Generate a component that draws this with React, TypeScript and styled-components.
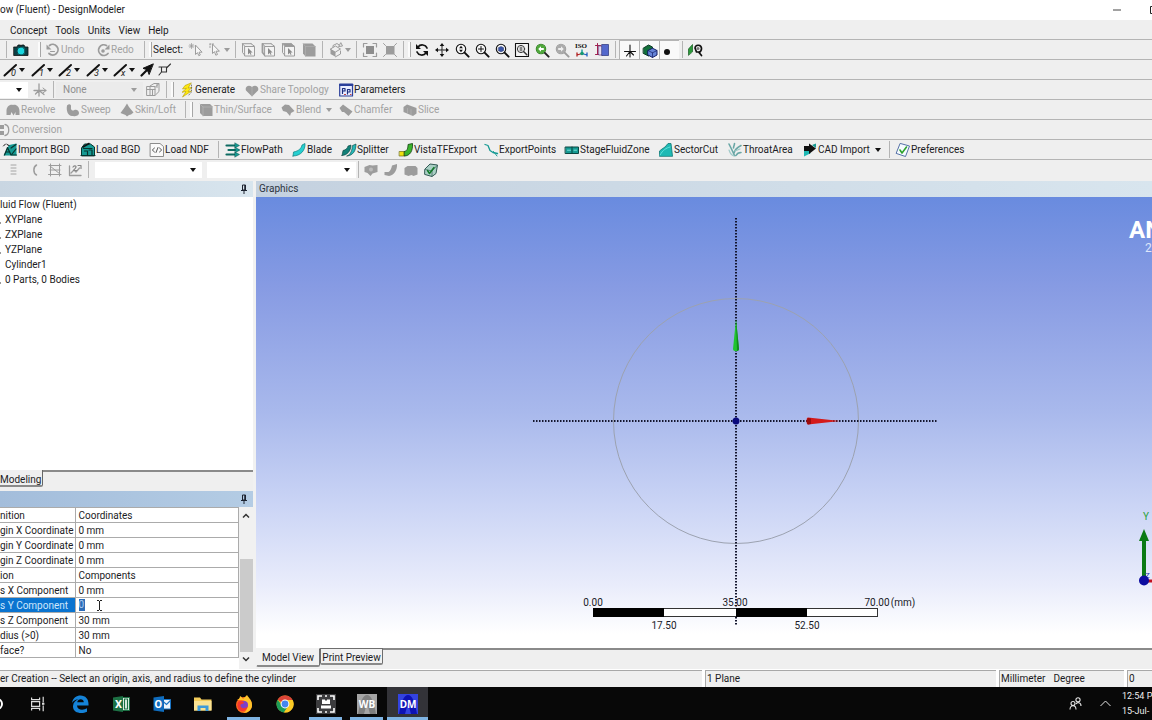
import React from 'react';
import styled, { createGlobalStyle, css } from 'styled-components';

const GlobalStyle = createGlobalStyle`
  * { box-sizing: border-box; }
  html, body, #root { height: 100%; margin: 0; }
  body { overflow: hidden; font: 10px/14px Roboto, "Noto Sans", sans-serif; font-variant-ligatures: none; color: #1c1c24; background: #efefef; }
  button, select, input { font: inherit; color: inherit; }
  svg { display: block; flex: none; }
`;

/* ---------- layout ---------- */
const Shell = styled.div`
  display: flex; flex-direction: column; height: 100vh; min-height: 480px; overflow: hidden;
`;
const TitleBar = styled.header`
  display: flex; align-items: center; height: 20px; flex: none; background: #fff; overflow: hidden; white-space: nowrap;
`;
const TitleText = styled.h1`margin: 0; font: inherit; flex: 1;`;
const WindowButton = styled.button<{ $w: number }>`
  width: ${p => p.$w}px; height: 20px; padding: 0; border: 0; background: none; overflow: hidden;
  display: flex; align-items: center; justify-content: flex-start; flex: none;
`;
const MenuBar = styled.nav`
  display: flex; align-items: center; height: 19px; flex: none; padding-left: 6px;
`;
const MenuButton = styled.button`
  padding: 2px 4px 0; border: 0; background: none; height: 19px;
`;
const Bar = styled.div<{ $pad?: number }>`
  display: flex; align-items: center; height: 20px; flex: none; padding-left: ${p => p.$pad ?? 0}px;
  border-top: 1px solid #b4b4b4; white-space: nowrap; overflow: hidden;
`;
const LastBar = styled(Bar)`height: 22px; padding-bottom: 2px;`;
const Space = styled.span<{ $w: number }>`width: ${p => p.$w}px; flex: none;`;
const Sep = styled.span<{ $w: number }>`
  width: ${p => p.$w}px; height: 17px; flex: none; display: flex; justify-content: center;
  &::before { content: ''; width: 1px; background: #b4b4b4; }
`;
const Grip = styled(Sep)`
  height: 15px;
  &::before { width: 2px; background: #fbfbfb; border-right: 1px solid #a6a6a6; }
`;
const Label = styled.span<{ $w: number }>`width: ${p => p.$w}px; flex: none; padding-top: 1px;`;
const ToolButton = styled.button<{ $w: number; $on?: boolean; $center?: boolean }>`
  width: ${p => p.$w}px; height: 19px; padding: 1px 0 0; flex: none; border: 0; background: none;
  display: flex; align-items: center; justify-content: ${p => (p.$center ? 'center' : 'flex-start')};
  white-space: nowrap;
  &:disabled { color: #a2a2a2; }
  ${p => p.$on && css`background: #f9f9f9; border-left: 1px solid #b4b4b4; border-top: 1px solid #b4b4b4;`}
`;
const Combo = styled.span<{ $w: number; $off?: boolean }>`
  display: grid; grid-template-columns: 1fr 18px; align-items: center; justify-items: center;
  width: ${p => p.$w}px; height: 16px; flex: none; background: ${p => (p.$off ? '#ebebeb' : '#fff')};
  color: ${p => (p.$off ? '#8f8f8f' : '#111')};
  select { grid-area: 1 / 1 / 2 / 3; width: 100%; height: 16px; appearance: none; border: 0; background: none; padding: 0 7px; opacity: 1; }
  svg { grid-area: 1 / 2; pointer-events: none; }
`;
const Workspace = styled.main`
  flex: 1; min-height: 0; display: grid; grid-template-columns: 253px minmax(0, 1fr); column-gap: 3px; background: #f1f1f1;
`;
const LeftColumn = styled.aside`display: flex; flex-direction: column; min-height: 0; min-width: 0;`;
const PaneHead = styled.div<{ $active?: boolean }>`
  height: 16px; flex: none; display: flex; align-items: center; justify-content: flex-end; padding-right: 5px;
  background: ${p => (p.$active ? 'linear-gradient(90deg,#a3bddb,#b4cce4)' : 'linear-gradient(90deg,#c9d6e2,#d8e5ee)')};
`;
const GraphicsHead = styled(PaneHead)`
  justify-content: flex-start; padding-left: 3px; color: #2c3440;
  background: linear-gradient(90deg,#c4d1df,#d8e5ee);
`;
const HeadTitle = styled.h2`margin: 0; font: inherit;`;
const PinButton = styled.button`padding: 0; border: 0; background: none; height: 14px; display: flex; align-items: center;`;
const Tree = styled.ul`
  flex: 1; min-height: 0; margin: 0; padding: 0; list-style: none; background: #fff; overflow: hidden;
`;
const TreeItem = styled.li<{ $indent?: number }>`
  height: 15px; line-height: 15px; display: flex; padding-left: ${p => p.$indent ?? 0}px; white-space: nowrap;
`;
const TreeMark = styled.span`
  width: 5px; flex: none; display: flex; align-items: flex-end; padding-bottom: 3px; color: #777;
  &::before { content: ''; width: 1px; height: 2px; background: #999; }
`;
const TabStrip = styled.div`display: flex; height: 21px; flex: none; align-items: flex-start; background: #efefef;`;
const LeftTab = styled.button`
  width: 43px; height: 17px; padding: 3px 0 0; border: 0; text-align: left; background: #efefef;
  border-right: 1px solid #666; border-bottom: 2px solid #8a8a8a; border-radius: 0 0 2px 0;
`;
const StripRule = styled.span`flex: 1; height: 2px; background: #8a8a8a;`;
const Details = styled.div`flex: none; height: 162px; display: flex; background: #fff;`;
const PropTable = styled.table`
  border-collapse: collapse; table-layout: fixed; width: 239px; height: 151px; flex: none;
  tr { height: 15px; }
  th, td { height: 15px; padding: 0; border: 1px solid #ababab; font-weight: 400; text-align: left; line-height: 13px; white-space: nowrap; overflow: hidden; }
  th { border-left: 0; width: 75px; }
  td { padding-left: 3px; }
`;
const PropRow = styled.tr<{ $selected?: boolean }>`
  ${p => p.$selected && css`th { background: #0a74d0; color: #cfe6fb; }`}
`;
const ValueCell = styled.span`display: flex; align-items: center; gap: 12px;`;
const ValueInput = styled.input`
  width: 6px; height: 12px; padding: 0; border: 0; outline: 0; background: #2b6cb8; color: #a9cdf2; line-height: 12px;
`;
const Scroll = styled.div`
  flex: 1; display: flex; flex-direction: column; align-items: center; justify-content: space-between; padding: 4px 0 6px; background: #f1f1f1;
`;
const Thumb = styled.span`width: 13px; height: 93px; background: #cbcbcb; margin-top: 36px;`;
const ScrollButton = styled.button`padding: 0; border: 0; background: none; height: 8px; display: flex; align-items: center;`;
const RightColumn = styled.section`display: flex; flex-direction: column; min-width: 0; min-height: 0;`;
const Viewport = styled.div`
  flex: 1; min-height: 0; overflow: hidden;
  background: linear-gradient(180deg,#698bdf 0%,#879be3 20%,#a9b9ec 48%,#cad4f5 68%,#e9ecfb 86%,#ffffff 97%);
  svg { width: 100%; height: 100%; }
`;
const ViewTabs = styled.div`
  display: flex; align-items: flex-start; height: 21px; flex: none; background: #efefef;
`;
const ViewTab = styled.button<{ $active?: boolean; $w: number }>`
  width: ${p => p.$w}px; flex: none; height: ${p => (p.$active ? 19 : 17)}px; padding: 2px 0 0; background: #f1f1f1;
  border: 1px solid #6e6e6e; border-bottom-width: 2px; border-bottom-color: #8a8a8a;
  border-radius: 0 0 2px 2px;
  ${p => p.$active && css`border-top-color: #f1f1f1; border-left-color: #f1f1f1;`}
`;
const StatusBar = styled.footer`
  display: flex; height: 18px; flex: none; background: #fff; column-gap: 3px; border-top: 1px solid #fff; white-space: nowrap;
`;
const StatusCell = styled.span<{ $w?: number }>`
  ${p => (p.$w ? css`width: ${p.$w}px; flex: none;` : css`flex: 1;`)}
  background: #efefef; border-top: 1px solid #a8a8a8; border-left: 1px solid #a8a8a8; padding-left: 1px; line-height: 15px; overflow: hidden;
`;
const StatusMessage = styled(StatusCell)`border-left: 0; padding-left: 0;`;
const Unit = styled.span`margin-right: 8px;`;
const TaskBar = styled.footer`display: flex; height: 33px; flex: none; background: #080808; color: #eee; overflow: hidden;`;
const TaskButton = styled.button<{ $w?: number; $open?: boolean; $active?: boolean }>`
  width: ${p => p.$w ?? 41}px; height: 33px; flex: none; padding: 0; border: 0; display: flex; justify-content: center; align-items: center;
  background: ${p => (p.$active ? '#333338' : 'none')};
  position: relative;
  &::after { content: ''; display: ${p => (p.$open ? 'block' : 'none')}; position: absolute; bottom: 0;
    left: ${p => (p.$active ? 0 : 4)}px; right: ${p => (p.$active ? 0 : 4)}px; height: 3px; background: #7fb4e3; }
`;
const Tray = styled.div`margin-left: auto; display: flex; align-items: center;`;
const Clock = styled.time`width: 32px; padding-left: 2px; font-size: 9px; line-height: 15px; padding-top: 1px; white-space: pre;`;

/* ---------- icons ---------- */
const G = '#9c9c9c';
const K = '#111';
const T = '#159a93';

const Svg = ({ children, w = 16 }: { children: React.ReactNode; w?: number }) => (
  <svg width={w} height={16} viewBox={`0 0 ${w} 16`} fill="none" strokeLinecap="round" strokeLinejoin="round" aria-hidden>{children}</svg>
);
const Caret = ({ c = K }: { c?: string }) => (
  <svg width={6} height={4} viewBox="0 0 6 4" aria-hidden><path d="M0 0h6L3 4z" fill={c} /></svg>
);
const Lens = ({ c, inner, handle = c }: { c: string; inner: React.ReactNode; handle?: string }) => (
  <Svg>
    <circle cx="7" cy="7" r="4.7" stroke={c} strokeWidth="1.1" fill="#f4f4f4" />
    <path d="M10.6 10.6l4 4" stroke={handle} strokeWidth="2" />{inner}
  </Svg>
);
const Pencil = ({ ch }: { ch: string }) => (
  <Svg>
    <path d="M1.500 13.500L13 3" stroke={K} strokeWidth="2" />
    <text x="8" y="14" fontSize="9" fontStyle="italic" fill="#222" fontFamily="Roboto, sans-serif">{ch}</text>
  </Svg>
);
const Pick = ({ top, side }: { top?: boolean; side?: boolean }) => (
  <Svg>
    <path d="M1.500 5V1.700h8.700M1.500 1.700L4 4.500M10 1.700l3.500 2.500" stroke={G} />
    <path d="M1.500 2v8.500L4 13.500" stroke={G} strokeWidth={side ? 1.8 : 1} />
    <rect x="4" y="4.500" width="9.500" height="9.500" stroke={G} fill="#f3f3f3" />
    {top && <path d="M2 1.500h8.500l3 3H4z" fill={G} />}
    <path d="M7 6v6.500l1.700-1.500 1 2 .8-.4-.9-2h2z" fill="#8a8a8a" />
  </Svg>
);

const icons: Record<string, React.ReactNode> = {
  camera: <Svg><path d="M1 5h3l1-2h2.500v2h1V3H11l1 2h3v8.500H1z" fill="#0c3f45" stroke={K} strokeWidth=".8" /><circle cx="8" cy="9" r="4" fill="#19d6de" stroke="#0d4a50" /></Svg>,
  undo: <Svg><path d="M4.500 3.500A5.300 5.300 0 1 1 4 11.500" stroke={G} strokeWidth="1.800" /><path d="M1.500 2.500v5h5z" fill={G} /><path d="M5.500 9.500h4" stroke={G} /></Svg>,
  redo: <Svg><path d="M11.500 3.500A5.300 5.300 0 1 0 13 11.500" stroke={G} strokeWidth="1.800" /><path d="M14.500 2.500v5h-5z" fill={G} /><circle cx="8" cy="9" r="1.800" fill={G} /></Svg>,
  newSel: <Svg><path d="M1 4h5M3.500 1.500v5M1.700 2.200l3.600 3.600M5.300 2.200L1.700 5.800" stroke={G} strokeWidth=".8" /><path d="M7.500 3.500v9l2-1.800 1.300 3 1.500-.700-1.300-2.800h2.700z" stroke={G} fill="#f6f6f6" /></Svg>,
  selMode: <Svg><path d="M2 2h5M2 2v4" stroke={G} strokeDasharray="1 1.500" /><path d="M4.500 2.500v9l2-1.800 1.300 3.500 1.700-.700-1.500-3.300h3z" stroke={G} fill="#f6f6f6" /></Svg>,
  pickPt: <Pick />, pickEdge: <Pick side />, pickFace: <Pick top />,
  body: <Svg><path d="M2 1.500h9.500l3 3v10H4.500l-2.500-3z" fill={G} /><path d="M2 1.500l2.500 3h10M4.500 4.500v10" stroke="#b4b4b4" strokeWidth=".6" /></Svg>,
  extend: <Svg><path d="M1.500 7l5-3 5 3-5 3z" stroke={G} /><path d="M1.500 7v5l5 2.800V10z" fill={G} /><path d="M6.500 14.800l5-2.800V9M4 5V3.500l4-2 2 1.500M12 1l1.500 3-3.500.5z" stroke={G} /></Svg>,
  expand: <Svg><rect x="4" y="4" width="8" height="8" fill="#8d8d8d" /><path d="M1.500 5V1.500H5M11 1.500h3.500V5M14.500 11v3.500H11M5 14.500H1.500V11" stroke={G} strokeWidth="1.200" /></Svg>,
  shrink: <Svg><rect x="4" y="4" width="8.500" height="8.500" fill={G} /><path d="M1.500 1.500l2 2M14.500 1.500l-2 2M14.500 14.500l-2-2M1.500 14.500l2-2" stroke={G} /></Svg>,
  rotate: <Svg><path d="M13 6C11.500 2.500 6.500 1.800 4 5M3 10c1.500 3.500 6.500 4.200 9 1" stroke={K} strokeWidth="1.700" /><path d="M2 2v5h5zM14 14V9H9z" fill={K} /></Svg>,
  pan: <Svg><path d="M8 4v8M4 8h8" stroke={K} strokeDasharray="1.500 1" /><path d="M8 1l2.300 3H5.700zM8 15l2.300-3H5.700zM1 8l3-2.300v4.600zM15 8l-3-2.300v4.600z" fill={K} /></Svg>,
  zoom: <Lens c={K} inner={<path d="M7 3.700l1.900 2.600H5.100zM7 10.300l1.900-2.600H5.100z" fill={K} />} />,
  zoomIn: <Lens c={K} inner={<path d="M4.500 7h5M7 4.500v5" stroke={K} />} />,
  zoomBox: <Lens c={K} inner={<path d="M4.500 5.700L7 4.500l2.500 1.200v3L7 9.800 4.500 8.700z" fill="#3a55a8" stroke="#1b2a66" strokeWidth=".5" />} />,
  zoomFit: <Svg><rect x="1.500" y="1.500" width="13" height="13" stroke={K} strokeWidth="1.100" fill="#f4f4f4" /><circle cx="7" cy="7" r="3.600" stroke="#333" /><path d="M9.800 9.800l3 3" stroke="#333" strokeWidth="1.500" /><path d="M7 5v4M5.800 6h2.400M5.800 8h2.400" stroke="#333" strokeWidth=".7" /></Svg>,
  magOn: <Lens c="#2f7a22" handle="#222" inner={<><circle cx="7" cy="7" r="4.600" fill="#4fa83b" /><path d="M4.200 7l2.800-2.800V6h2.800v2H7v1.800z" fill="#fff" /></>} />,
  magOff: <Lens c={G} inner={<><circle cx="7" cy="7" r="4.500" fill="#ababab" /><path d="M9.800 7L7 4.200V6H4.200v2H7v1.800z" fill="#eee" /></>} />,
  iso: <Svg><text x="1" y="6" fontSize="7" fontWeight="700" fontFamily="Liberation Serif, serif" fill={K}>ISO</text><path d="M8 11V8" stroke="#1fa0a0" strokeWidth="1.500" /><path d="M8 11.500l-5 1.500M3 11v3" stroke="#b02020" strokeWidth="1.300" /><path d="M8 11.500l5 1.500M13 11v3" stroke="#2060c0" strokeWidth="1.300" /><circle cx="8" cy="11.500" r="1.800" fill="#159a70" /></Svg>,
  lookAt: <Svg><path d="M1.500 3.500h5M3.500 1.500v11M1.500 12.500h3" stroke="#a02050" /><path d="M5 4h4v9H5z" fill="#e4dcf4" stroke="#704080" strokeWidth=".7" /><rect x="8" y="2.500" width="6.500" height="11" fill="#5468cc" stroke="#28327a" strokeWidth=".7" /></Svg>,
  axis: <Svg><path d="M8 2v12M2.500 8.500h11M8 8.500L4.500 13M8 8.500l3.500 3.500" stroke={K} strokeWidth="1.100" /></Svg>,
  model: <Svg><path d="M1.500 5l5-3 4 2v6l-4 3-5-2.500z" fill="#12703a" stroke="#0b3a24" /><path d="M6 7.500l4.500-2.300 4.500 2.300v4.500L10.500 14.500 6 12z" fill="#6684d8" stroke="#151f66" /><path d="M6 7.500l4.500 2.300L15 7.500M10.500 9.800v4.700" stroke="#151f66" strokeWidth=".7" /></Svg>,
  dot: <Svg><circle cx="5" cy="9" r="3" fill={K} /></Svg>,
  leaf: <Svg><path d="M1.500 13V7l4-4.500v7z" fill="#2c9a3a" stroke="#145a20" strokeWidth=".7" /><path d="M8 6c.5-4 6.500-3.500 6.500.5 0 2.500-1.500 3.500-2.500 4l2.500 3M8 6l1.500 4h2.500" stroke={K} strokeWidth="1.700" /><circle cx="11" cy="6.500" r="1.500" fill="#777" /></Svg>,
  arrowBlack: <Svg><path d="M2.500 13.500L9 7" stroke={K} strokeWidth="2.200" /><path d="M14 2L4 6.300l2.700 1L9 9.500l1 2.700z" fill={K} stroke={K} /></Svg>,
  tag: <Svg><path d="M3 5h6.500v5H4.500V5M2 5h8M9.500 6l4-4M2 13l2.500-3" stroke="#333" strokeWidth="1.100" /></Svg>,
  axisOff: <Svg><path d="M7 2v12M2 8.500h12M7 8.500L3.500 12M7 8.500l5 4" stroke={G} strokeWidth="1.300" /><path d="M11 6l3 2.500-3 2.500" stroke={G} /></Svg>,
  sketchNew: <Svg><path d="M2 4.500h8v9H2zM2 7.500h8M5 4.500v9M7.500 7.500v6M5 4l4-2.500h5v8L10.500 13" stroke={G} /><path d="M10.500 5l3-3M12 2v3.500" stroke={G} /></Svg>,
  bolt: <Svg><path d="M12 1L6 3.500 3.500 7l4-.7-4.500 4 4-.8-3.500 5.500 9-6-3.500.5 4-4.300-3.600.8z" fill="#ffea12" stroke="#b59a00" strokeWidth=".6" /><path d="M12.500 3v7L9 14" stroke="#555" strokeWidth=".7" strokeDasharray="1 1.500" /></Svg>,
  topo: <Svg><path d="M8 14.500L2 8.500c-1.500-3.500 2.500-6.500 6-3.500 3.500-3 7.500 0 6 3.500z" fill={G} /><path d="M8 5v9" stroke="#bbb" strokeWidth=".6" /></Svg>,
  params: <Svg><rect x="1.700" y="2" width="12.800" height="12" fill="#e9edff" stroke="#2a3f9a" strokeWidth="1.200" /><path d="M2 3h12.500" stroke="#2a3f9a" strokeWidth="2" /><path d="M4.500 11.500V6.500H7v2.500H4.500M9.500 12V7.500H12V10H9.500" stroke="#1d2f80" strokeWidth="1.200" /><path d="M6.500 12.500h1M12.500 12.500h.5" stroke="#c03030" /></Svg>,
  revolve: <Svg><path d="M1.500 13V8C2 3.500 6 2 8 3c3-1 6.500 1.500 6.500 6v4h-4v-3l-2 3.500-2-3.500-1 3z" fill={G} /></Svg>,
  sweep: <Svg><path d="M2 3.500c2-2 4.500-1.500 4 1.500-.5 3 1 4 3 3.200 2.500-1.200 5 .3 5 2.800 0 3-4 3.500-7 3-4-.5-6-5-5-10.500z" fill={G} /></Svg>,
  skin: <Svg><path d="M8 1.500l2 3.500 4.500 5.500-2.500 2-2 .5-2 1.500-1.500-1.500-5-2L5.500 5.500z" fill={G} /></Svg>,
  solid: <Svg><path d="M2 2h10l2.500 2.500V14H5l-3-3z" fill={G} /><path d="M2 2l3 3h9.500M5 5v9" stroke="#b8b8b8" strokeWidth=".7" /></Svg>,
  blend: <Svg><path d="M1.500 5.500L5 2.500l4 .5 5.500 6-3.500 2-1 3-3.500-4-3.500-1z" fill={G} /></Svg>,
  chamfer: <Svg><path d="M1.500 6L5 2.500l9.500 7L10.500 14 6 10H4z" fill={G} /></Svg>,
  slice: <Svg><path d="M1.500 5L5 2.500 14.500 6v5.500L11 14 1.500 10z" fill={G} /><path d="M5.500 6.500v5M9 7.500V13" stroke="#b8b8b8" strokeWidth=".6" /></Svg>,
  conversion: <Svg w={12}><path d="M0 3h4v4H0zM0 9h4v4H0z" fill={G} /><path d="M5 2.500c5 1 5 10 0 11" stroke={G} strokeWidth="1.300" /></Svg>,
  importBgd: <Svg><path d="M1.500 13.500L7 3l7.500-1.500v12z" fill={T} /><path d="M2.500 13l3-7.500L9 13M4 10h4M9 6l5-3.500M10 12l4-5M9 13h5.500" stroke="#06352f" strokeWidth="1.200" /><path d="M1.500 4l2-2M5 2.500l2 1" stroke={K} /></Svg>,
  loadBgd: <Svg><path d="M1.500 13.500V6l3-4h6l4 3v8.500z" fill={T} stroke="#06352f" /><path d="M3.500 6.500H12M4.500 9h3v4M9 8h3v5M1 13.500h14" stroke="#06352f" strokeWidth="1.200" /><path d="M3 5l6-3.500" stroke={K} strokeWidth="1.500" /></Svg>,
  loadNdf: <Svg><path d="M1.500 1.500h9.500l3.500 3v10h-13z" stroke="#8c8c8c" fill="#fafafa" /><path d="M5.500 6L3.300 8l2.200 2M10.500 6l2.200 2-2.200 2M9 5.500L7 10.500" stroke="#444" strokeWidth=".9" /></Svg>,
  flow: <Svg><path d="M1.500 3.500H11M3.500 8H13M1.500 12.500H11" stroke="#0d6b62" strokeWidth="2.200" /><path d="M10 1l4.500 2.500L10 6zM10.500 5.500L15 8l-4.500 2.500zM10 10l4.500 2.500L10 15z" fill={T} stroke="#0d5650" strokeWidth=".5" /></Svg>,
  blade: <Svg><path d="M2 14l.5-4C8 9 10.500 6 11 3l3-1.500C14.500 8 10 14 2 14z" fill="#26cfd0" stroke="#0f7f80" strokeWidth=".7" /></Svg>,
  splitter: <Svg><path d="M1 13.500l1-5C5 8 6.500 6 7 4l3-1C10 9 6 13.500 1 13.500z" fill="#118078" stroke="#073f3b" strokeWidth=".6" /><path d="M6 14c4-1.500 5-6 5.500-10.500L15 2c0 7-3 11.500-9 12z" fill="#25b8b8" stroke="#073f3b" strokeWidth=".6" /></Svg>,
  vista: <Svg><path d="M1.500 9.500h5v4.500h-5z" fill="#f0e010" stroke="#5a5a00" strokeWidth=".6" /><path d="M6.500 9.500C9.500 9 10 6 10 2.500l4.500-1C15 9 12 14 6.500 14z" fill="#3bb52e" stroke="#123f10" strokeWidth=".8" /></Svg>,
  points: <Svg><path d="M2 2.500l3 1 2 5 3 2 4.500 1" stroke={T} strokeWidth="1.300" /><path d="M10.500 9.500L14 14" stroke={T} /></Svg>,
  stage: <Svg><rect x="1.500" y="5" width="13" height="6.500" fill={T} stroke="#0a4742" /><path d="M8 5v6.500" stroke="#0a4742" /><path d="M3.500 8.200h3M10 8.200h2.500" stroke="#7ce0d8" /></Svg>,
  sector: <Svg><path d="M1.500 14V9L4 7l3-2 3-3.500h3l1.500 12.500z" fill="#1fb9b4" stroke="#0e7773" strokeWidth=".8" /><path d="M2 13c3-5 6-7 10-8" stroke="#62e3dd" /></Svg>,
  throat: <Svg><path d="M2 2l2.500 5 3 6.500M6.500 6c0-2 1-3 1-4.500M7 11c1-4 3-5.500 7-7.500M9 13.500c1-2 2.500-3 5-3" stroke="#6aa7a6" strokeWidth="1.600" /><path d="M2 8c1 3 2 5 5 6M8 9l5-2" stroke="#9fc9c8" strokeWidth="1.200" /></Svg>,
  cad: <Svg><path d="M2 14.500V6h5v5h2z" fill="#1fb9b4" /><path d="M2 4h5V1.500L14 6.500 7 12V9H2z" fill={K} /><path d="M10 3l4-1.500V6" fill={T} /></Svg>,
  prefs: <Svg><path d="M5.500 1.500l9 2.500-4 10.500-9-3z" fill="#f6fbff" stroke="#5572a8" /><path d="M5 8l2 3 4.500-6" stroke="#2da32d" strokeWidth="1.600" /></Svg>,
  list: <Svg><path d="M6 3h5M6 6h5M6 9h5M6 12h5" stroke={G} strokeWidth=".9" /></Svg>,
  arc: <Svg><path d="M9.500 3c-3.500 2-3.500 8 0 10" stroke={G} strokeWidth="1.500" /></Svg>,
  grid: <Svg><path d="M2 3.500h12M3 8h10M1.500 12.500H14M3.500 2v12M12.500 2v12M3 4l10 8" stroke={G} /></Svg>,
  chart: <Svg><path d="M2.500 4v9.500H14M4 11l3-3 2 2 3.500-4" stroke={G} strokeWidth="1.300" /><path d="M6 5c2-2.500 4-.5 2.500 1L6.500 8.500H10M11 3.500h3v3" stroke="#888" strokeWidth="1.200" /></Svg>,
  blob1: <Svg><path d="M1.500 5l5-2 3 .5 5-.5v7l-5 1.500-2 2.500-3-3-3-1z" fill={G} /><circle cx="8" cy="7.500" r="2" fill="#bbb" /></Svg>,
  blob2: <Svg><path d="M1.500 10h4c2-1 3-4 3.500-6.500L14 2c.5 6-3 11.500-8 12l-4.500-1z" fill={G} /></Svg>,
  blob3: <Svg><path d="M1.500 6l3-2h8l2 2v6.500l-4 1.500-2-1-3 1-4-1.500z" fill={G} /></Svg>,
  check: <Svg><path d="M2 7l5-5 7.500 1-1.500 8.500-4 3-7-2z" fill="#a9cfc4" stroke="#335a55" /><path d="M2.500 7.500l6.500 1.500 5-5.500M9 9v5" stroke="#335a55" strokeWidth=".7" /><path d="M4.500 8.500l2 3 4.500-6" stroke="#137a2a" strokeWidth="1.500" /></Svg>,
};

type ToolProps = { icon: string; w: number; text?: string; off?: boolean; on?: boolean; caret?: boolean };
const Tool = ({ icon, w, text, off, on, caret }: ToolProps) => (
  <ToolButton $w={w} $on={on} $center={!text} disabled={off} aria-label={text ?? icon}>
    {icons[icon]}{text}{caret && text && <Space $w={5} />}{caret && <Caret c={off ? G : K} />}
  </ToolButton>
);
const Tools = ({ names, off, on }: { names: string[]; off?: boolean; on?: boolean }) => (
  <>{names.map(n => <Tool key={n} icon={n} w={20} off={off} on={on} />)}</>
);
const Pin = () => (
  <PinButton aria-label="Auto hide">
    <svg width="8" height="10" viewBox="0 0 8 10" fill="none" stroke="#1c2330"><path d="M2.500 1h3v5h-3zM1 6.500h6M4 6.500V10" /><path d="M5 1v5" strokeWidth="1.500" /></svg>
  </PinButton>
);

/* ---------- data ---------- */
const turbo: ToolProps[] = [
  { icon: 'flow', text: 'FlowPath', w: 66 }, { icon: 'blade', text: 'Blade', w: 50 },
  { icon: 'splitter', text: 'Splitter', w: 57 }, { icon: 'vista', text: 'VistaTFExport', w: 85 },
  { icon: 'points', text: 'ExportPoints', w: 81 }, { icon: 'stage', text: 'StageFluidZone', w: 94 },
  { icon: 'sector', text: 'SectorCut', w: 69 }, { icon: 'throat', text: 'ThroatArea', w: 75 },
  { icon: 'cad', text: 'CAD Import', w: 83, caret: true },
];
const properties = [
  ['nition', 'Coordinates'], ['gin X Coordinate', '0 mm'], ['gin Y Coordinate', '0 mm'], ['gin Z Coordinate', '0 mm'],
  ['ion', 'Components'], ['s X Component', '0 mm'], ['s Y Component', '0'], ['s Z Component', '30 mm'],
  ['dius (>0)', '30 mm'], ['face?', 'No'],
];

const Scene = () => (
  <svg viewBox="0 0 896 451" preserveAspectRatio="xMidYMid meet" fontFamily="Roboto, sans-serif" fontSize="10">
    <circle cx="480" cy="224" r="122.500" fill="none" stroke="#9ca2b0" strokeWidth="1" />
    <g stroke="#14162e" strokeWidth="2" strokeDasharray="1.500 1.500">
      <path d="M277 224H682" /><path d="M480 21V429" />
    </g>
    <path d="M480 122l3 30c0 3-6 3-6 0z" fill="#1fc42f" />
    <path d="M480 122l3 30c0 1-1 2-2 2z" fill="#128a1e" />
    <path d="M584 224l-32-3.500c-2 0-2 7 0 7z" fill="#d41a1a" />
    <path d="M552 221l3 .4v5.600l-3 .4c-1.500-1-1.500-5 0-6.400z" fill="#9c0d0d" />
    <circle cx="480" cy="224" r="3.500" fill="#0a0a7c" />
    <g fill="#1a1a28" textAnchor="middle">
      <text x="337" y="409">0.00</text><text x="479" y="409">35.00</text><text x="621" y="409">70.00</text>
      <text x="408" y="432">17.50</text><text x="551" y="432">52.50</text><text x="647" y="409">(mm)</text>
    </g>
    <rect x="337.500" y="411.500" width="284" height="8" fill="#fff" stroke="#333" />
    <path d="M337 411h71v9h-71zM480 411h71v9h-71z" fill="#000" />
    <text x="873" y="41" fontSize="24" fontWeight="700" fill="#fff" fontFamily="Liberation Sans Narrow, Roboto, sans-serif">AN</text>
    <text x="889" y="55" fontSize="12" fill="#dfe6fa">2</text>
    <text x="887" y="323" fill="#2aa23a">Y</text>
    <path d="M888 383V344" stroke="#0b7a14" strokeWidth="4" />
    <path d="M888 332l5 12h-10z" fill="#0b7a14" />
    <path d="M888 384h10" stroke="#c01020" strokeWidth="3" />
    <text x="889" y="381" fontSize="8" fill="#2233aa">Z</text>
    <circle cx="888" cy="383.500" r="5" fill="#0c0ca0" />
  </svg>
);

/* ---------- task bar drawings ---------- */
const Box = ({ children, s = 20 }: { children: React.ReactNode; s?: number }) => (
  <svg width={s} height={s} viewBox="0 0 20 20" fill="none" aria-hidden>{children}</svg>
);
const TaskView = () => <Box s={16}><path d="M2 2v2.500h10V2M2 18v-2.500h10V18M2 7h10v6H2zM16.500 1v7M16.500 12v7" stroke="#ddd" strokeWidth="1.500" /><path d="M15 8.500h3v2.500h-3z" fill="#ddd" /></Box>;
const Edge = () => <Box><path d="M2 9C3 3.500 6.500 1.500 10.500 1.500c5 0 8 3.500 8 8.500v1.500H7c.3 5 6.500 5 10 2.800v3.400c-5 2.600-14.500 1.800-14-5.700C3.300 8.500 5.500 6 8.500 5.200 4.500 5.500 3 7.500 2 9zm5.200-.7h6.600c0-4-6-4-6.600 0z" fill="#1583d8" /></Box>;
const Excel = () => <Box><path d="M9 3.500h9.500v13H9z" fill="#e9f3ec" stroke="#1d7044" /><path d="M13.500 5h3v10h-3z" stroke="#1d7044" strokeWidth="1.200" /><path d="M2 3.500L12 2v16L2 16.500z" fill="#1d7044" /><text x="4" y="14" fontSize="11" fontWeight="700" fill="#fff" fontFamily="Roboto, sans-serif">X</text></Box>;
const Outlook = () => <Box><path d="M10 5.500h8.500v9.500H10z" fill="#eef5fb" stroke="#1a74c4" /><path d="M10 6.500l4.500 4 4-4" stroke="#1a74c4" strokeWidth="1.200" /><path d="M1.500 3.500L12 2v16L1.500 16.500z" fill="#0f6cbd" /><text x="2.500" y="14" fontSize="11" fontWeight="700" fill="#fff" fontFamily="Roboto, sans-serif">O</text></Box>;
const Explorer = () => <Box><path d="M1 3.500h6l1.500 2H18.500v11H1z" fill="#f5cd5b" /><path d="M1 7h17.500v9.500H1z" fill="#fbe394" /><path d="M4.500 17v-5.500h11V17h-3v-3h-5v3z" fill="#3f9bd9" /></Box>;
const Firefox = () => <Box><circle cx="10" cy="11" r="8" fill="#ff6a1c" /><path d="M3 6c2-.5 3-2.500 3-4 2.500 1 3 3 3 3l4-4c2 3 5.500 6 5 11-.5 4-4 7-8.500 7 5-3 5-9 1.500-12-2-1.500-5-1-8-1z" fill="#ffc42b" /><circle cx="10" cy="11" r="4" fill="#7d3fc8" /><path d="M4 8c1-1 4-1.500 5.500 0 1.500 1-1 2-2 2s-2 3 1 4c2 .7 4-.5 5-1.500-.5 3-3 5-6 4.500C4 16.300 2.500 12 4 8z" fill="#f5372e" /></Box>;
const Chrome = () => <Box><circle cx="10" cy="10" r="8.500" fill="#e9b91c" /><path d="M10 10L2.600 5.800A8.500 8.500 0 0 1 17.600 6H10z" fill="#dc4437" /><path d="M2.600 5.800A8.500 8.500 0 0 0 9 18.500l4-6.500-3-2-3 1.500z" fill="#1c9c58" /><path d="M10 6h7.600A8.500 8.500 0 0 1 9 18.500L13.500 12z" fill="#fbca25" /><circle cx="10" cy="10" r="4.400" fill="#fff" /><circle cx="10" cy="10" r="3.400" fill="#4486f0" /></Box>;
const Snip = () => <Box><rect width="20" height="20" fill="#3c3c3e" /><path d="M2 6V2h4M14 2h4v4M18 14v4h-4M6 18H2v-4M9 2h2M9 18h2" stroke="#fff" strokeWidth="1.600" /><path d="M6 5.500h3v1h2v-1h3V10H6zM5 11.500h10v3H5z" fill="#fff" /></Box>;
const Badge = ({ t, bg, mark }: { t: string; bg: string; mark: string }) => (
  <Box><rect width="20" height="20" fill={bg} /><path d="M1 20C3 8 6 1 10 1s7 7 9 19h-6L10 9 7 20z" fill={mark} /><text x="10" y="14" fontSize="10" fontWeight="700" fill="#fff" textAnchor="middle" fontFamily="Noto Sans, sans-serif">{t}</text></Box>
);

export default function App() {
  return (
    <Shell>
      <GlobalStyle />
      <TitleBar>
        <TitleText>ow (Fluent) - DesignModeler</TitleText>
        <WindowButton $w={37} aria-label="Minimize"><svg width="8" height="2"><path d="M0 1h8" stroke="#444" /></svg></WindowButton>
        <WindowButton $w={2} aria-label="Maximize"><svg width="8" height="8"><path d="M.5 .5h7v7h-7z" fill="none" stroke="#222" /></svg></WindowButton>
      </TitleBar>
      <MenuBar>
        {['Concept', 'Tools', 'Units', 'View', 'Help'].map(m => <MenuButton key={m}>{m}</MenuButton>)}
      </MenuBar>

      <Bar $pad={5}>
        <Sep $w={3} /><Tool icon="camera" w={25} /><Grip $w={12} />
        <Tool icon="undo" text="Undo" w={50} off /><Tool icon="redo" text="Redo" w={45} off />
        <Sep $w={8} /><Grip $w={5} /><Label $w={33}>Select:</Label>
        <Tool icon="newSel" w={20} off /><Tool icon="selMode" w={26} off caret /><Sep $w={7} />
        <Tools names={['pickPt', 'pickEdge', 'pickFace', 'body']} off /><Sep $w={7} />
        <Tool icon="extend" w={27} off caret /><Sep $w={7} />
        <Tools names={['expand', 'shrink']} off /><Sep $w={7} /><Grip $w={5} />
        <Tools names={['rotate', 'pan', 'zoom', 'zoomIn', 'zoomBox', 'zoomFit', 'magOn']} />
        <Tool icon="magOff" w={20} off /><Tools names={['iso', 'lookAt']} /><Sep $w={7} />
        <Tools names={['axis', 'model', 'dot']} on /><Sep $w={6} /><Tool icon="leaf" w={20} />
      </Bar>
      <Bar>
        {['0', '1', '2', '3', 'x'].map((c, i) => (
          <ToolButton key={c} $w={i % 2 ? 27 : 28} $center aria-label={`Level ${c}`}><Pencil ch={c} /><Caret /></ToolButton>
        ))}
        <Tool icon="arrowBlack" w={18} /><Tool icon="tag" w={18} />
      </Bar>
      <Bar>
        <Combo $w={28}><select aria-label="Plane"><option></option></select><Caret /></Combo>
        <Tool icon="axisOff" w={23} off /><Sep $w={5} />
        <Combo $w={87} $off><select aria-label="Sketch" disabled><option>None</option></select><Caret c={G} /></Combo>
        <Tool icon="sketchNew" w={20} off /><Sep $w={7} /><Grip $w={5} /><Space $w={4} />
        <Tool icon="bolt" text="Generate" w={65} /><Tool icon="topo" text="Share Topology" w={94} off />
        <Tool icon="params" text="Parameters" w={70} />
      </Bar>
      <Bar $pad={5}>
        <Tool icon="revolve" text="Revolve" w={60} off /><Tool icon="sweep" text="Sweep" w={54} off />
        <Tool icon="skin" text="Skin/Loft" w={62} off /><Sep $w={8} /><Grip $w={4} /><Space $w={5} />
        <Tool icon="solid" text="Thin/Surface" w={82} off /><Tool icon="blend" text="Blend" w={58} off caret />
        <Tool icon="chamfer" text="Chamfer" w={64} off /><Tool icon="slice" text="Slice" w={45} off />
      </Bar>
      <Bar><Tool icon="conversion" text="Conversion" w={70} off /></Bar>
      <Bar $pad={2}>
        <Tool icon="importBgd" text="Import BGD" w={78} /><Tool icon="loadBgd" text="Load BGD" w={69} />
        <Tool icon="loadNdf" text="Load NDF" w={66} /><Sep $w={7} /><Space $w={3} />
        {turbo.map(t => <Tool key={t.icon} {...t} />)}
        <Sep $w={8} /><Space $w={2} /><Tool icon="prefs" text="Preferences" w={75} />
      </Bar>
      <LastBar $pad={3}>
        <Tool icon="list" w={20} off /><Space $w={2} /><Tools names={['arc', 'grid', 'chart']} off /><Sep $w={6} /><Space $w={4} />
        <Combo $w={107}><select aria-label="Named selection"><option></option></select><Caret /></Combo><Space $w={5} />
        <Combo $w={149}><select aria-label="Operation"><option></option></select><Caret /></Combo>
        <Sep $w={5} /><Tools names={['blob1', 'blob2', 'blob3']} off /><Tool icon="check" w={20} />
      </LastBar>

      <Workspace>
        <LeftColumn>
          <PaneHead><Pin /></PaneHead>
          <Tree>
            <TreeItem>luid Flow (Fluent)</TreeItem>
            {['XYPlane', 'ZXPlane', 'YZPlane'].map(p => <TreeItem key={p}><TreeMark />{p}</TreeItem>)}
            <TreeItem $indent={5}>Cylinder1</TreeItem>
            <TreeItem><TreeMark />0 Parts, 0 Bodies</TreeItem>
          </Tree>
          <TabStrip><LeftTab>Modeling</LeftTab><StripRule /></TabStrip>
          <PaneHead $active><Pin /></PaneHead>
          <Details>
            <PropTable>
              <tbody>
                {properties.map(([name, value]) => {
                  const selected = name === 's Y Component';
                  return (
                    <PropRow key={name} $selected={selected}>
                      <th scope="row">{name}</th>
                      <td>{selected ? (
                        <ValueCell>
                          <ValueInput aria-label={name} defaultValue={value} />
                          <svg width="5" height="11" viewBox="0 0 5 11" fill="none" stroke="#222"><path d="M0 .5h2M3 .5h2M2.500 1v9M0 10.500h2M3 10.500h2" /></svg>
                        </ValueCell>
                      ) : value}</td>
                    </PropRow>
                  );
                })}
              </tbody>
            </PropTable>
            <Scroll>
              <ScrollButton aria-label="Scroll up"><svg width="8" height="5"><path d="M1 4.500l3-3 3 3" fill="none" stroke="#333" strokeWidth="1.500" /></svg></ScrollButton>
              <Thumb />
              <ScrollButton aria-label="Scroll down"><svg width="8" height="5"><path d="M1 .5l3 3 3-3" fill="none" stroke="#333" strokeWidth="1.500" /></svg></ScrollButton>
            </Scroll>
          </Details>
        </LeftColumn>
        <RightColumn>
          <GraphicsHead><HeadTitle>Graphics</HeadTitle></GraphicsHead>
          <Viewport><Scene /></Viewport>
          <ViewTabs>
            <ViewTab $active $w={64}>Model View</ViewTab>
            <ViewTab $w={63}>Print Preview</ViewTab>
            <StripRule />
          </ViewTabs>
        </RightColumn>
      </Workspace>

      <StatusBar>
        <StatusMessage>er Creation -- Select an origin, axis, and radius to define the cylinder</StatusMessage>
        <StatusCell $w={291}>1 Plane</StatusCell>
        <StatusCell $w={125}><Unit>Millimeter</Unit>Degree</StatusCell>
        <StatusCell $w={25}>0</StatusCell>
      </StatusBar>
      <TaskBar>
        <TaskButton $w={16} aria-label="Search"><svg width="16" height="16"><circle cx="-3" cy="8" r="5" fill="none" stroke="#fff" strokeWidth="2" /></svg></TaskButton>
        <TaskButton $w={43} aria-label="Task view"><TaskView /></TaskButton>
        <TaskButton aria-label="Edge"><Edge /></TaskButton>
        <TaskButton aria-label="Excel"><Excel /></TaskButton>
        <TaskButton aria-label="Outlook"><Outlook /></TaskButton>
        <TaskButton aria-label="Explorer"><Explorer /></TaskButton>
        <TaskButton $open aria-label="Firefox"><Firefox /></TaskButton>
        <TaskButton aria-label="Chrome"><Chrome /></TaskButton>
        <TaskButton $open aria-label="Snip"><Snip /></TaskButton>
        <TaskButton $open><Badge t="WB" bg="#a5a5a5" mark="#7f7f7f" /></TaskButton>
        <TaskButton $open $active><Badge t="DM" bg="#3343e0" mark="#0d12b4" /></TaskButton>
        <Tray>
          <TaskButton $w={30} aria-label="People"><svg width="13" height="13" viewBox="0 0 13 13" fill="none" stroke="#e4e4e4" strokeWidth="1.100"><circle cx="4" cy="6.500" r="2" /><path d="M1 12.500c0-5 6-5 6 0" /><circle cx="9" cy="2.800" r="2.100" /><path d="M7 7c1-2 5-2 5 2" /></svg></TaskButton>
          <TaskButton $w={30} aria-label="Hidden icons"><svg width="11" height="7" viewBox="0 0 11 7" fill="none" stroke="#e4e4e4"><path d="M.5 6l5-5 5 5" /></svg></TaskButton>
          <Clock>{'12:54 P\n15-Jul-'}</Clock>
        </Tray>
      </TaskBar>
    </Shell>
  );
}
